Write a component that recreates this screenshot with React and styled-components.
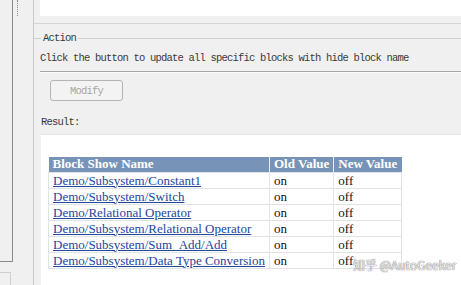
import React from "react";
import styled, { createGlobalStyle } from "styled-components";

const rows = [
  ["Demo/Subsystem/Constant1", "on", "off"],
  ["Demo/Subsystem/Switch", "on", "off"],
  ["Demo/Relational Operator", "on", "off"],
  ["Demo/Subsystem/Relational Operator", "on", "off"],
  ["Demo/Subsystem/Sum_Add/Add", "on", "off"],
  ["Demo/Subsystem/Data Type Conversion", "on", "off"],
];

const GlobalStyle = createGlobalStyle`
  html, body {
    margin: 0;
    padding: 0;
    background: #f0f0f0;
  }
  #root {
    height: 285px;
    overflow: hidden;
  }
`;

const Window = styled.div`
  position: relative;
  display: flex;
  height: 285px;
  background: #f0f0f0;
  font-family: "Liberation Mono", monospace;
  font-size: 10.5px;
  letter-spacing: -0.8px;
  color: #3a3a3a;
`;

const LeftCol = styled.div`
  display: flex;
  flex-direction: column;
  width: 13px;
`;

const Pane = styled.div`
  height: 262px;
  border-right: 1px solid #8a8a8a;
  border-bottom: 1px solid #8a8a8a;
  box-sizing: border-box;
`;

const SmallBox = styled.div`
  flex: 1;
  width: 11px;
  margin-top: 10px;
  border-top: 1px solid #cfcfcf;
  border-right: 1px solid #cfcfcf;
  box-sizing: border-box;
`;

const Gutter = styled.div`
  width: 20px;
  padding-left: 4px;
  box-sizing: border-box;
`;

const Dots = styled.div`
  height: 16px;
  border-left: 1px dotted #8c8c8c;
`;

const Main = styled.div`
  flex: 1;
  display: flex;
  flex-direction: column;
  border-left: 1px solid #c9c9c9;
`;

const TopBox = styled.div`
  height: 23px;
  padding-left: 6px;
  border-bottom: 1px solid #d4d4d4;
`;

const TopWhite = styled.div`
  height: 16px;
  background: #fff;
`;

const Group = styled.div`
  flex: 1;
  display: flex;
  flex-direction: column;
  margin-top: 14px;
  padding-left: 6px;
  border-top: 1px solid #d0d0d0;
`;

const Legend = styled.div`
  width: fit-content;
  margin: -7px 0 0 1px;
  padding: 0 2px;
  line-height: 13px;
  background: #f0f0f0;
`;

const Line = styled.div`
  line-height: 14px;
  margin-top: ${(p) => p.$top || 0}px;
  margin-left: ${(p) => p.$left || 0}px;
  white-space: nowrap;
`;

const Separator = styled.div`
  margin-top: 6px;
  border-top: 1px solid #a5a5a5;
  border-bottom: 1px solid #fbfbfb;
`;

const Button = styled.button`
  width: 73px;
  height: 21px;
  margin: 7px 0 0 10px;
  padding: 0;
  border: 1px solid #b4b4b4;
  border-radius: 3px;
  background: #f3f3f3;
  color: #a6a6a6;
  font-family: inherit;
  font-size: inherit;
  letter-spacing: inherit;
`;

const ResultArea = styled.div`
  flex: 1;
  margin: 5px 0 0 1px;
  padding: 22px 0 0 7px;
  background: #fff;
  border-top: 1px solid #e4e4e4;
`;

const Table = styled.table`
  border-collapse: collapse;
  font-family: "Liberation Serif", "Times New Roman", serif;
  font-size: 13px;
  letter-spacing: 0;
  color: #111;
`;

const Th = styled.th`
  width: ${(p) => p.$w}px;
  height: 15px;
  padding: 0 4px;
  box-sizing: border-box;
  background: #7893b8;
  color: #fff;
  font-weight: bold;
  text-align: left;
  line-height: 14px;
  border-left: 1px solid #e8eef6;
  white-space: nowrap;
  &:first-child {
    border-left: none;
  }
`;

const Td = styled.td`
  height: 16px;
  padding: 0 4px;
  box-sizing: border-box;
  line-height: 15px;
  border: 1px solid #dfe2e6;
  white-space: nowrap;
`;

const Link = styled.a`
  color: #23459c;
  text-decoration: underline;
`;

const Watermark = styled.div`
  position: absolute;
  left: 353px;
  top: 256px;
  font-family: "Noto Sans CJK SC", "Noto Sans", sans-serif;
  font-size: 12px;
  color: rgba(255, 255, 255, 0.85);
  text-shadow: 0 0 1px #777, 0 0 1px #777;
  letter-spacing: 0;
`;

export default function App() {
  return (
    <>
      <GlobalStyle />
      <Window>
        <LeftCol>
          <Pane />
          <SmallBox />
        </LeftCol>
        <Gutter>
          <Dots />
        </Gutter>
        <Main>
          <TopBox>
            <TopWhite />
          </TopBox>
          <Group>
            <Legend>Action</Legend>
            <Line $top={6}>
              Click the button to update all specific blocks with hide block name
            </Line>
            <Separator />
            <div>
              <Button disabled>Modify</Button>
            </div>
            <Line $top={14} $left={1}>
              Result:
            </Line>
            <ResultArea>
              <Table>
                <thead>
                  <tr>
                    <Th $w={221}>Block Show Name</Th>
                    <Th $w={64}>Old Value</Th>
                    <Th $w={68}>New Value</Th>
                  </tr>
                </thead>
                <tbody>
                  {rows.map((r) => (
                    <tr key={r[0]}>
                      <Td>
                        <Link href="#">{r[0]}</Link>
                      </Td>
                      <Td>{r[1]}</Td>
                      <Td>{r[2]}</Td>
                    </tr>
                  ))}
                </tbody>
              </Table>
            </ResultArea>
          </Group>
        </Main>
        <Watermark>知乎 @AutoGeeker</Watermark>
      </Window>
    </>
  );
}
